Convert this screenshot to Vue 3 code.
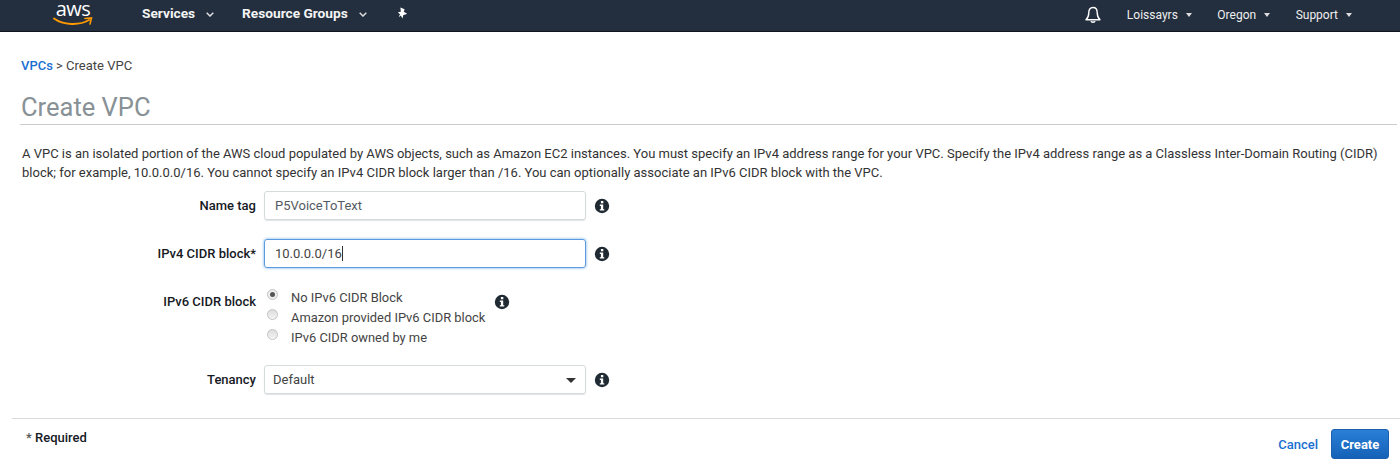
<template>
  <div class="page">
    <header class="nav">
      <div class="logo">
        <span class="logo-text">aws</span>
        <svg class="smile" width="40" height="10" viewBox="0 0 40 10">
          <path d="M1 1.5C10 8 26 9 36 3" fill="none" stroke="#f90" stroke-width="2" stroke-linecap="round" />
          <path d="M32 1.5L38.5 1L37 7" fill="none" stroke="#f90" stroke-width="1.6" stroke-linecap="round" />
        </svg>
      </div>
      <div class="menu services">Services
        <svg class="chev" width="8" height="5" viewBox="0 0 8 5"><path d="M0.7 0.7l3.3 3.3 3.3-3.3" fill="none" stroke="#ddd" stroke-width="1.5" /></svg>
      </div>
      <div class="menu groups">Resource Groups
        <svg class="chev" width="8" height="5" viewBox="0 0 8 5"><path d="M0.7 0.7l3.3 3.3 3.3-3.3" fill="none" stroke="#ddd" stroke-width="1.5" /></svg>
      </div>
      <svg class="pin" width="11" height="12" viewBox="0 0 13 14">
        <path d="M4 0.5L9 2.5L8 5.5L12 8L9 9L7.5 9.5L6.5 13.5L4.5 10L2 12L3.5 8.5L1 6L4.5 5.5Z" fill="#fff" />
      </svg>
      <div class="spacer"></div>
      <svg class="bell" width="16" height="18" viewBox="0 0 16 18">
        <path d="M8 1.5C5 1.5 3.8 3.8 3.8 6.5C3.8 10 3 12 1 13.8H15C13 12 12.2 10 12.2 6.5C12.2 3.8 11 1.5 8 1.5Z" fill="none" stroke="#fff" stroke-width="1.4" stroke-linejoin="round" />
        <path d="M6 15.2C6.3 16.6 9.7 16.6 10 15.2" fill="none" stroke="#fff" stroke-width="1.4" />
      </svg>
      <div v-for="item in navRight" :key="item" class="right-item">
        {{ item }}<span class="caret"></span>
      </div>
    </header>

    <main class="content">
      <div class="crumbs"><a class="link">VPCs</a> &gt; Create VPC</div>
      <h1 class="title">Create VPC</h1>
      <p class="desc">
        A VPC is an isolated portion of the AWS cloud populated by AWS objects, such as Amazon EC2 instances. You must specify an IPv4 address range for your VPC. Specify the IPv4 address range as a Classless Inter-Domain Routing (CIDR) block; for example, 10.0.0.0/16. You cannot specify an IPv4 CIDR block larger than /16. You can optionally associate an IPv6 CIDR block with the VPC.
      </p>

      <div class="form">
        <div class="row row-name">
          <label class="label">Name tag</label>
          <div class="field">P5VoiceToText</div>
          <svg class="info" width="16" height="16" viewBox="0 0 16 16"><use href="#info-icon" /></svg>
        </div>
        <div class="row row-cidr">
          <label class="label">IPv4 CIDR block*</label>
          <div class="field focused">10.0.0.0/16<span class="cursor"></span></div>
          <svg class="info" width="16" height="16" viewBox="0 0 16 16"><use href="#info-icon" /></svg>
        </div>
        <div class="row row-radio">
          <label class="label radio-label">IPv6 CIDR block</label>
          <div class="radios">
            <div v-for="(opt, i) in radios" :key="opt" class="radio-row">
              <span class="radio" :class="{ on: i === 0 }"></span>
              <span>{{ opt }}</span>
            </div>
          </div>
          <svg class="info radio-info" width="16" height="16" viewBox="0 0 16 16"><use href="#info-icon" /></svg>
        </div>
        <div class="row row-tenancy">
          <label class="label">Tenancy</label>
          <div class="field select">Default<span class="select-caret"></span></div>
          <svg class="info" width="16" height="16" viewBox="0 0 16 16"><use href="#info-icon" /></svg>
        </div>
      </div>
    </main>

    <footer class="foot">
      <div class="required"><span class="star">*</span> Required</div>
      <div class="actions">
        <a class="link cancel">Cancel</a>
        <button class="create">Create</button>
      </div>
    </footer>

    <svg width="0" height="0" class="defs">
      <symbol id="info-icon" viewBox="0 0 16 16">
        <circle cx="8" cy="8" r="7.2" fill="#1f2a33" />
        <rect x="6.9" y="3" width="2.4" height="2.3" fill="#fff" />
        <path d="M5.8 6.6H9.2V11.2H10.3V12.6H5.8V11.2H6.9V8H5.8Z" fill="#fff" />
      </symbol>
    </svg>
  </div>
</template>

<script setup>
const navRight = ['Loissayrs', 'Oregon', 'Support']
const radios = ['No IPv6 CIDR Block', 'Amazon provided IPv6 CIDR block', 'IPv6 CIDR owned by me']
</script>

<style>
html, body { margin: 0; background: #fff; }
</style>

<style scoped>
.page {
  width: 1400px;
  height: 473px;
  overflow: hidden;
  font-family: Roboto, "Liberation Sans", sans-serif;
  font-size: 13px;
  color: #444;
  background: #fff;
}

.nav {
  height: 31px;
  background: #232f3e;
  border-bottom: 1px solid #10151c;
  display: flex;
  align-items: center;
  color: #fff;
}
.logo {
  width: 38px;
  margin-left: 54px;
  margin-right: 2px;
  align-self: flex-start;
  display: flex;
  flex-direction: column;
  align-items: center;
}
.logo-text {
  font-family: "Open Sans", sans-serif;
  font-size: 20px;
  line-height: 17px;
  color: #fff;
  letter-spacing: -0.6px;
}
.smile { flex: none; }
.menu {
  font-size: 13.7px;
  font-weight: 700;
  display: flex;
  align-items: center;
  color: #f4f4f4;
  margin-bottom: 5px;
}
.services { margin-left: 48px; }
.groups { margin-left: 28px; }
.chev { margin-left: 11px; margin-top: 2px; }
.pin { margin-left: 30px; margin-bottom: 5px; }
.spacer { flex: 1; }
.bell { margin-right: 25.5px; margin-bottom: 1px; }
.right-item {
  font-size: 12px;
  margin-right: 25.5px;
  margin-bottom: 1px;
  display: flex;
  align-items: center;
  color: #eee;
}
.right-item:last-child { margin-right: 48px; }
.caret {
  margin-left: 8px;
  border-left: 3.5px solid transparent;
  border-right: 3.5px solid transparent;
  border-top: 4px solid #ddd;
}

.content { padding: 0 3px 0 20px; }
.crumbs {
  margin-top: 25px;
  line-height: 17px;
  margin-left: 1px;
  color: #444;
}
.link { color: #1a6fd0; font-weight: 500; }
.title {
  margin: 16px 0 0;
  font-size: 25.5px;
  line-height: 34px;
  font-weight: 400;
  color: #879196;
  padding: 0 0 0 1px;
  height: 34px;
  border-bottom: 1px solid #ccc;
}
.desc {
  margin: 19px 0 0 2px;
  width: 1372px;
  line-height: 19px;
  font-size: 13px;
  color: #333;
}

.form { margin-top: 9px; }
.row { display: flex; align-items: center; }
.label {
  width: 236px;
  text-align: right;
  font-weight: 500;
  color: #16191f;
  flex: none;
}
.field {
  margin-left: 8px;
  height: 27px;
  line-height: 27px;
  padding-left: 10px;
  box-sizing: content-box;
  width: 310px;
  border: 1px solid #d5dbdb;
  border-radius: 3px;
  color: #545b64;
  display: flex;
  align-items: center;
  box-shadow: 0 1px 1px rgba(0, 20, 40, 0.12);
}
.focused {
  border-color: #5b9be0;
  box-shadow: 0 0 3px #6aa6e6;
  color: #444;
}
.cursor {
  width: 1px;
  height: 15px;
  background: #333;
}
.select { padding-left: 8px; width: 312px; position: relative; color: #444; }
.select-caret {
  position: absolute;
  right: 9px;
  top: 12px;
  border-left: 5px solid transparent;
  border-right: 5px solid transparent;
  border-top: 5px solid #333;
}
.info { margin-left: 8px; flex: none; }
.row-cidr { margin-top: 19px; }
.row-radio { margin-top: 19px; align-items: flex-start; }
.radio-label { margin-top: 7px; }
.radios { margin-left: 11px; width: 227px; }
.radio-row {
  height: 20px;
  display: flex;
  align-items: center;
  gap: 13px;
  color: #444;
  font-size: 12.9px;
}
.radio {
  width: 9px;
  height: 9px;
  margin-top: -5px;
  border-radius: 50%;
  border: 1px solid #c4c4c4;
  background: linear-gradient(#ddd, #f4f4f4);
  flex: none;
  position: relative;
}
.radio.on { background: #eee; }
.radio.on::after {
  content: "";
  position: absolute;
  left: 2px;
  top: 2px;
  width: 5px;
  height: 5px;
  border-radius: 50%;
  background: #555;
}
.radio-info { margin-left: 0; margin-top: 7px; }
.row-tenancy { margin-top: 18px; }

.foot {
  margin: 24px 0 0 12px;
  border-top: 1px solid #d9d9d9;
  display: flex;
  justify-content: space-between;
  align-items: flex-start;
}
.required {
  margin: 10px 0 0 14px;
  font-weight: 500;
  color: #16191f;
  line-height: 17px;
}
.star { color: #555; }
.actions {
  display: flex;
  align-items: center;
  margin: 10px 11px 0 0;
}
.cancel { margin-right: 13px; }
.create {
  width: 58px;
  height: 30px;
  padding: 0;
  border: 1px solid #1b5fae;
  border-radius: 3px;
  background: linear-gradient(#2a7fd6, #1462b8);
  color: #fff;
  font-family: inherit;
  font-size: 13px;
  font-weight: 700;
}
.defs { position: absolute; }
</style>
